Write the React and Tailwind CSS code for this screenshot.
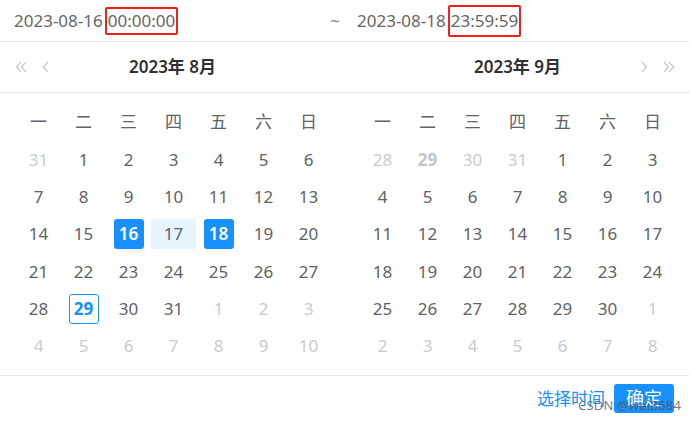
import React from "react";

const weekdays = ["一", "二", "三", "四", "五", "六", "日"];

// each cell: [day, kind] kind: "o" other month, "n" normal
function buildMonth(prevTail, daysInMonth, totalCells) {
  const cells = prevTail.map((d) => ({ d, other: true }));
  for (let i = 1; i <= daysInMonth; i++) cells.push({ d: i, other: false });
  let n = 1;
  while (cells.length < totalCells) cells.push({ d: n++, other: true });
  return cells;
}

const aug = buildMonth([31], 31, 42);
const sep = buildMonth([28, 29, 30, 31], 30, 42);

function Chevron({ double, dir }) {
  const flip = dir === "right" ? "scale(-1,1) translate(-14,0)" : "";
  return (
    <svg width="14" height="12" viewBox="0 0 14 12" fill="none" stroke="#b4b7bd" strokeWidth="1.1">
      <g transform={flip}>
        {double ? (
          <>
            <path d="M6 1 L1.5 6 L6 11" />
            <path d="M11 1 L6.5 6 L11 11" />
          </>
        ) : (
          <path d="M9 1 L4.5 6 L9 11" />
        )}
      </g>
    </svg>
  );
}

function Cell({ cell, month }) {
  const { d, other } = cell;
  if (!other && month === 8 && (d === 16 || d === 18)) {
    return (
      <div className="w-[45px] h-[37.3px] flex items-center justify-center">
        <span className="w-[30px] h-[30px] rounded-[3px] bg-[#1890ff] text-white font-semibold flex items-center justify-center">
          {d}
        </span>
      </div>
    );
  }
  if (!other && month === 8 && d === 17) {
    return (
      <div className="w-[45px] h-[37.3px] flex items-center justify-center">
        <span className="w-[45px] h-[30px] bg-[#e6f4ff] text-[#606266] flex items-center justify-center">
          {d}
        </span>
      </div>
    );
  }
  if (!other && month === 8 && d === 29) {
    return (
      <div className="w-[45px] h-[37.3px] flex items-center justify-center">
        <span className="w-[30px] h-[30px] rounded-[3px] border border-[#1890ff] text-[#1890ff] font-bold flex items-center justify-center">
          {d}
        </span>
      </div>
    );
  }
  if (other && month === 9 && d === 29) {
    return (
      <div className="w-[45px] h-[37.3px] flex items-center justify-center text-[#c0c4cc] font-bold">
        {d}
      </div>
    );
  }
  return (
    <div
      className={`w-[45px] h-[37.3px] flex items-center justify-center ${
        other ? "text-[#c8cbd0]" : "text-[#606266]"
      }`}
    >
      {d}
    </div>
  );
}

function Panel({ title, cells, month, left }) {
  return (
    <div className="w-[345px]">
      <div className="h-[51px] border-b border-[#e4e7ed] flex items-center justify-between px-[15px]">
        <div className="w-[40px] flex items-center gap-[10px]">
          {left && (
            <>
              <Chevron double />
              <Chevron />
            </>
          )}
        </div>
        <div className="text-[17px] font-semibold text-[#303133] pb-[1px]">{title}</div>
        <div className="w-[40px] flex items-center justify-end gap-[10px]">
          {!left && (
            <>
              <Chevron dir="right" />
              <Chevron double dir="right" />
            </>
          )}
        </div>
      </div>
      <div className={`pt-[10px] pb-[10px] ${left ? "pl-[16px]" : "pl-[15px]"}`}>
        <div className="grid grid-cols-[repeat(7,45px)] text-[17px]">
          {weekdays.map((w) => (
            <div key={w} className="h-[38px] flex items-center justify-center text-[#606266]">
              {w}
            </div>
          ))}
          {cells.map((c, i) => (
            <Cell key={i} cell={c} month={month} />
          ))}
        </div>
      </div>
    </div>
  );
}

export default function App() {
  return (
    <div
      className="w-[690px] h-[423px] bg-white relative overflow-hidden"
      style={{ fontFamily: '"Noto Sans", "Noto Sans CJK SC", sans-serif' }}
    >
      {/* range inputs */}
      <div className="h-[42px] mx-[1px] border-b border-[#e4e7ed] flex items-center text-[17px] text-[#666]">
        <div className="w-[344px] pl-[13px] pr-[5px] flex items-center justify-between">
          <div className="flex items-center">
            <span>2023-08-16</span>
            <span className="ml-[2px] h-[28px] px-[1px] border-2 border-[#f0201a] rounded-[2px] flex items-center">
              00:00:00
            </span>
          </div>
          <span className="text-[#888]">~</span>
        </div>
        <div className="pl-[12px] flex items-center">
          <span>2023-08-18</span>
          <span className="ml-[2px] h-[32px] px-[1px] border-2 border-[#f0201a] rounded-[2px] flex items-center">
            23:59:59
          </span>
        </div>
      </div>

      {/* calendars */}
      <div className="flex">
        <Panel title="2023年 8月" cells={aug} month={8} left />
        <Panel title="2023年 9月" cells={sep} month={9} />
      </div>

      {/* footer */}
      <div className="mx-[1px] border-t border-[#e4e7ed] h-[47px] flex items-center justify-end pr-[15px] gap-[9px]">
        <span className="text-[17px] text-[#1890ff]">选择时间</span>
        <button className="h-[29px] w-[60px] rounded-[3px] bg-[#1890ff] text-white text-[18px] flex items-center justify-center">
          确定
        </button>
      </div>

      {/* watermark */}
      <div className="absolute left-[578px] top-[396px] text-[13px] text-[#555]/80 tracking-[0.2px]">
        CSDN @wei8684
      </div>
    </div>
  );
}
